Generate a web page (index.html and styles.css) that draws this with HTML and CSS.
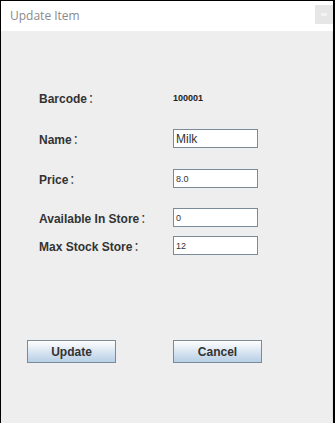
FILE: index.html
```html
<!DOCTYPE html>
<html lang="en">
<head>
    <meta charset="UTF-8">
    <meta name="viewport" content="width=device-width, initial-scale=1.0">
    <title>Update Item</title>
    <link rel="stylesheet" href="styles.css">
</head>
<body>
    <div class="window">
        <div class="title-bar">
            <span class="title">Update Item</span>
            <span class="close-btn"><span class="close-mark"></span></span>
        </div>

        <div class="content">
            <div class="form">
                <div class="row row-barcode">
                    <label class="label">Barcode<span class="colon">：</span></label>
                    <span class="barcode">100001</span>
                </div>
                <div class="row row-name">
                    <label class="label">Name<span class="colon">：</span></label>
                    <input class="field field-large" type="text" value="Milk">
                </div>
                <div class="row row-price">
                    <label class="label">Price<span class="colon">：</span></label>
                    <input class="field" type="text" value="8.0">
                </div>
                <div class="row row-available">
                    <label class="label">Available In Store<span class="colon">：</span></label>
                    <input class="field" type="text" value="0">
                </div>
                <div class="row row-max">
                    <label class="label">Max Stock Store<span class="colon">：</span></label>
                    <input class="field" type="text" value="12">
                </div>
            </div>

            <div class="buttons">
                <button class="btn">Update</button>
                <button class="btn">Cancel</button>
            </div>
        </div>
    </div>
</body>
</html>
```
FILE: styles.css
```css
html, body {
    margin: 0;
    padding: 0;
    background: #000;
}
.window {
    width: 332px;
    height: 422px;
    border-top: 1px solid #000;
    border-left: 1px solid #000;
    border-right: 2px solid #000;
    display: flex;
    flex-direction: column;
}
.title-bar {
    height: 30px;
    background: #fff;
    display: flex;
    align-items: center;
    justify-content: space-between;
    padding: 0 0 0 9px;
}
.title {
    font-family: "Open Sans", "Noto Sans", sans-serif;
    font-size: 12px;
    color: #8a8a8a;
    margin-top: -1px;
}
.close-btn {
    width: 18px;
    height: 19px;
    background: #e6e6e6;
    margin-top: -4px;
    display: flex;
    align-items: center;
    justify-content: center;
}
.close-mark {
    width: 6px;
    height: 3px;
    background: #f2f2f2;
}
.content {
    flex: 1;
    background: #eeeeee;
    border-right: 1px solid #e2e2e2;
    padding: 57px 0 0 38px;
}
.row {
    display: flex;
    align-items: center;
    height: 19px;
}
.row-name {
    margin-top: 22px;
}
.row-price {
    margin-top: 21px;
}
.row-available {
    margin-top: 20px;
}
.row-max {
    margin-top: 9px;
}
.label {
    width: 134px;
    font-family: "Liberation Sans", sans-serif;
    font-weight: bold;
    font-size: 12px;
    color: #333;
}
.colon {
    font-family: "Noto Sans CJK SC", sans-serif;
    font-weight: normal;
    margin-left: 1px;
}
.barcode {
    font-family: "Liberation Sans", sans-serif;
    font-weight: bold;
    font-size: 9px;
    color: #222;
}
.field {
    width: 85px;
    height: 19px;
    box-sizing: border-box;
    border: 1px solid #7a8a99;
    background: #fff;
    padding: 0 2px;
    margin: 0;
    font-family: "Liberation Sans", sans-serif;
    font-size: 9px;
    color: #333;
    outline: none;
}
.field-large {
    font-size: 12px;
}
.buttons {
    display: flex;
    gap: 57px;
    margin: 85px 0 0 -12px;
}
.btn {
    width: 89px;
    height: 23px;
    border: 1px solid #7a8a99;
    background: linear-gradient(#ffffff, #dde8f3 45%, #b8cfe5);
    font-family: "Liberation Sans", sans-serif;
    font-weight: bold;
    font-size: 12px;
    color: #333;
    padding: 0;
    margin: 0;
}
```
